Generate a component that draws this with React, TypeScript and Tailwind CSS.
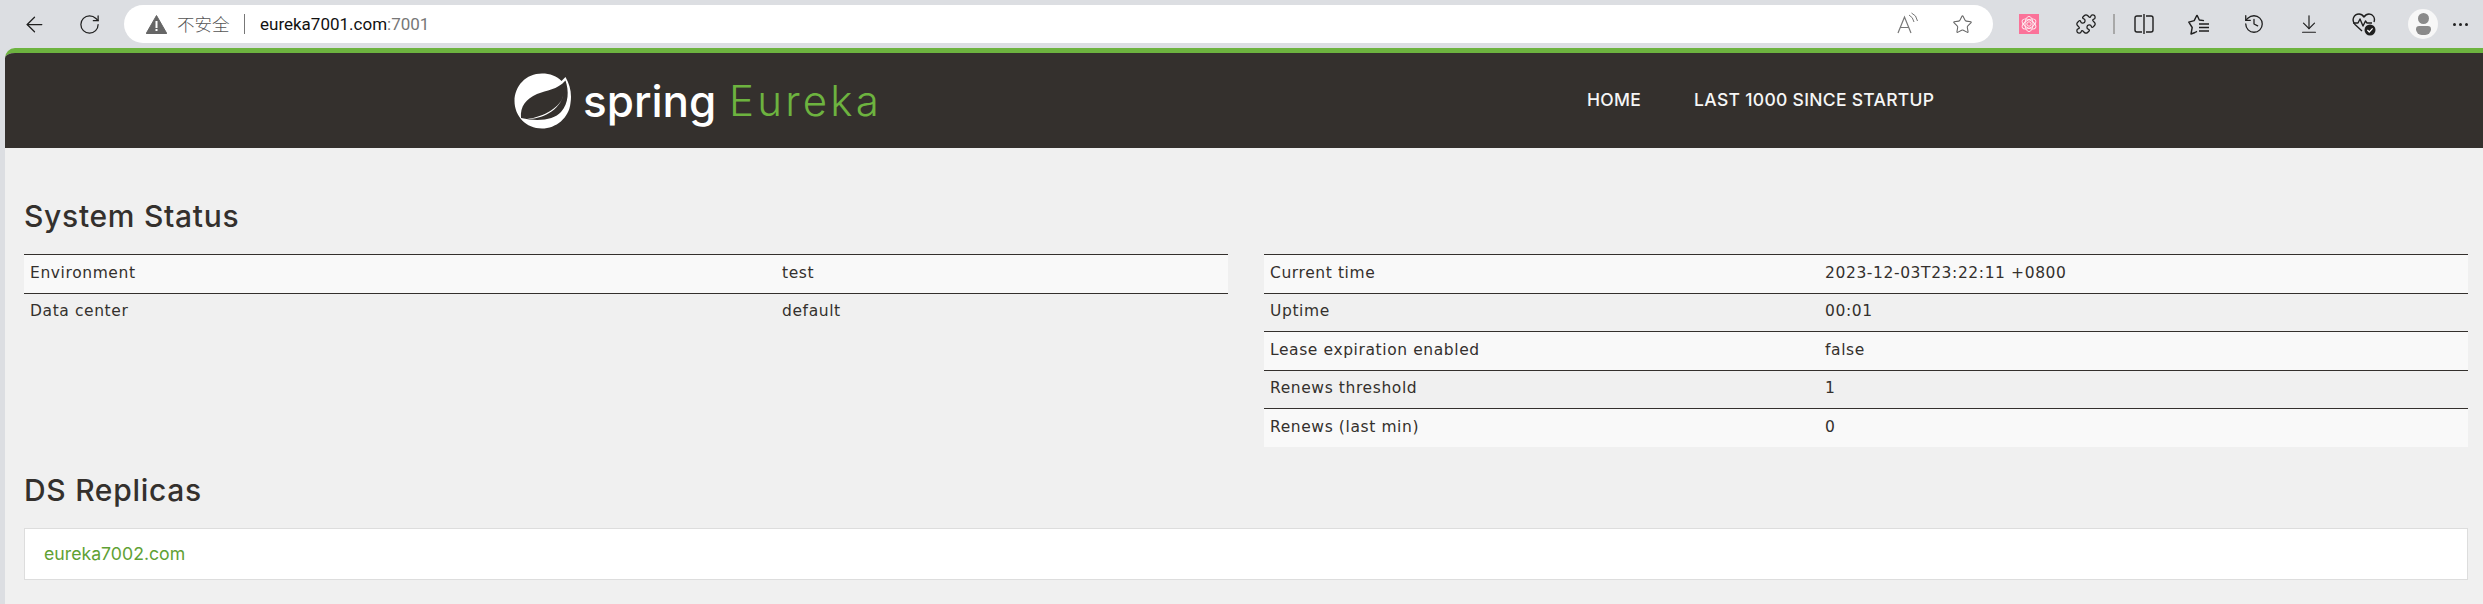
import { ArrowLeft, RotateCw, Star, Puzzle, History, ArrowDownToLine } from "lucide-react";

const ic = { size: 22, strokeWidth: 1.4, color: "#1f1f1f" };

function Btn({ children, className = "" }: { children: React.ReactNode; className?: string }) {
  return <div className={`flex h-[48px] w-[55px] shrink-0 items-center justify-center ${className}`}>{children}</div>;
}

function Warning() {
  return (
    <svg width="21" height="19" viewBox="0 0 21 19">
      <path d="M10.5 0.5 L20.8 18.5 L0.2 18.5 Z" fill="#666" stroke="#666" strokeLinejoin="round" />
      <rect x="9.5" y="6" width="2" height="7" fill="#fff" />
      <rect x="9.5" y="14" width="2" height="2" fill="#fff" />
    </svg>
  );
}

function ReadAloud() {
  return (
    <svg width="22" height="24" viewBox="0 0 22 24" fill="none" stroke="#777" strokeWidth="1.2">
      <path d="M1 21 L7.5 5 L14 21 M3.4 15.5 H11.6" />
      <path d="M12 3 Q16 5 17 10 M14.5 1 Q19.5 3 20.5 9" strokeWidth="1" />
    </svg>
  );
}

function GptIcon() {
  return (
    <svg width="20" height="20" viewBox="0 0 20 20">
      <rect width="20" height="20" fill="#fb7299" />
      <g fill="none" stroke="#fff" strokeWidth="0.9" opacity="0.9">
        <circle cx="10" cy="10" r="2.2" />
        <ellipse cx="10" cy="10" rx="7.6" ry="4" transform="rotate(30 10 10)" />
        <ellipse cx="10" cy="10" rx="7.6" ry="4" transform="rotate(90 10 10)" />
        <ellipse cx="10" cy="10" rx="7.6" ry="4" transform="rotate(150 10 10)" />
      </g>
    </svg>
  );
}

function SplitIcon() {
  return (
    <svg width="20" height="22" viewBox="0 0 20 22" fill="none" stroke="#1f1f1f" strokeWidth="1.4">
      <path d="M8 3 H3 Q1 3 1 5 V17 Q1 19 3 19 H8 M12 3 H17 Q19 3 19 5 V17 Q19 19 17 19 H12" />
      <path d="M10 1 V21" />
    </svg>
  );
}

function FavList() {
  return (
    <svg width="22" height="22" viewBox="0 0 22 22" fill="none" stroke="#1f1f1f" strokeWidth="1.4" strokeLinejoin="round">
      <path d="M9 2 L11.3 7 L16 7.6 M7 19.5 L3 21 L4.2 14.5 L0.8 9.2 L6.2 7.6 L9 2 M7 19.5 L9 18.4" />
      <path d="M11 11 H21 M11 14.5 H21 M11 18 H21" />
    </svg>
  );
}

function Health() {
  return (
    <svg width="24" height="24" viewBox="0 0 24 24" fill="none" stroke="#1f1f1f" strokeWidth="1.4" strokeLinejoin="round">
      <path d="M10 19 L3 12.5 C-1 8 2 2 7 2 C9.5 2 11 3.5 12 5 C13 3.5 14.5 2 17 2 C21 2 23.5 6 22 10" />
      <path d="M1 11 H6 L8 7 L11 14 L13.5 9 L15 11 H20" />
      <circle cx="18" cy="18" r="5.5" fill="#1f1f1f" stroke="none" />
      <path d="M15.4 18 L17.3 20 L20.6 16.3" stroke="#fff" strokeWidth="1.2" />
    </svg>
  );
}

function Avatar() {
  return (
    <div className="flex h-[30px] w-[30px] flex-col items-center justify-center gap-[2px] rounded-full bg-[#f7f7f7]">
      <div className="h-[11px] w-[11px] rounded-full bg-[#8a8a8a]" />
      <div className="h-[9px] w-[15px] rounded-b-[7px] rounded-t-[4px] bg-[#8a8a8a]" />
    </div>
  );
}

function Toolbar() {
  return (
    <div className="flex h-[48px] shrink-0 items-center bg-[#dcdee2]">
      <div className="w-[7px] shrink-0" />
      <Btn><ArrowLeft {...ic} size={25} strokeWidth={1.2} /></Btn>
      <Btn><RotateCw {...ic} size={23} strokeWidth={1.3} /></Btn>
      <div className="ml-[7px] flex h-[38px] w-[1869px] shrink-0 items-center rounded-[19px] bg-white pl-[22px]">
        <Warning />
        <span className="ml-[10px] font-['Noto_Sans_CJK_SC',sans-serif] text-[17.5px] font-light leading-none text-[#555]">不安全</span>
        <span className="ml-[14px] h-[20px] w-[1.5px] bg-[#777]" />
        <span className="ml-[15px] font-['Roboto',sans-serif] text-[17px] leading-none text-[#111]">
          eureka7001.com<span className="text-[#777]">:7001</span>
        </span>
        <div className="ml-auto flex items-center">
          <Btn className="w-[50px]"><ReadAloud /></Btn>
          <Btn className="w-[50px]"><Star size={21} strokeWidth={1.2} color="#666" /></Btn>
          <div className="w-[3px]" />
        </div>
      </div>
      <div className="w-[8px] shrink-0" />
      <Btn className="w-[55px]"><GptIcon /></Btn>
      <div className="w-[2px] shrink-0" />
      <Btn><Puzzle {...ic} /></Btn>
      <span className="h-[20px] w-[2px] shrink-0 bg-[#a8a8a8]" />
      <Btn className="ml-[1px] w-[55px]"><SplitIcon /></Btn>
      <Btn><FavList /></Btn>
      <Btn><History {...ic} /></Btn>
      <Btn><ArrowDownToLine {...ic} strokeWidth={1.3} /></Btn>
      <Btn><Health /></Btn>
      <Btn className="ml-[2px] w-[60px]"><Avatar /></Btn>
      <div className="flex shrink-0 gap-[3px]">
        <span className="h-[3px] w-[3px] rounded-full bg-[#222]" />
        <span className="h-[3px] w-[3px] rounded-full bg-[#222]" />
        <span className="h-[3px] w-[3px] rounded-full bg-[#222]" />
      </div>
    </div>
  );
}

function SpringLeaf() {
  return (
    <svg width="57" height="56" viewBox="0 0 57 56" className="shrink-0">
      <path d="M28 0.5 C36 0.5 43 3 47.5 8 L51.5 4 C56 12 58 20 56.5 30 C55 45 42 55.5 28 55.5 C12 55.5 0.5 43 0.5 28 C0.5 13 12 0.5 28 0.5 Z" fill="#fff" />
      <path d="M7 45 C6 33 12 26 23 21 C33 17 43 17 51.5 7.5 C55 18 55 30 47 39 C40 47 24 49 7 45 Z" fill="#34302d" />
      <path d="M13 46 C28 46 45 38 49.5 22 C47 34 30 44 13 46 Z" fill="#fff" />
    </svg>
  );
}

function Header() {
  return (
    <div className="flex h-[95px] shrink-0 items-center bg-[#34302d] pl-[509px]">
      <SpringLeaf />
      <span className="ml-[12px] w-[146px] font-['Inter',sans-serif] text-[44px] font-medium leading-none tracking-[0px] text-white">spring</span>
      <span className="font-['Inter',sans-serif] text-[42px] font-light leading-none tracking-[3.2px] text-[#6db33f]">Eureka</span>
      <div className="ml-[705px] flex items-center gap-[53px] pb-[2px] font-['Inter',sans-serif] text-[17.5px] font-medium uppercase leading-none tracking-[0.3px] text-[#f6f6f6]">
        <span>Home</span>
        <span>Last 1000 since startup</span>
      </div>
    </div>
  );
}

function InfoTable({ rows, first }: { rows: [string, string][]; first: string }) {
  return (
    <table className="w-[1204px] shrink-0 border-collapse font-['DejaVu_Sans',sans-serif] text-[15.5px] tracking-[0.6px] text-[#34302d]">
      <tbody>
        {rows.map(([k, v], i) => (
          <tr key={k} className={i % 2 === 0 ? "bg-[#f9f9f9]" : ""}>
            <td className={`h-[38.5px] border-t border-[#34302d] p-0 pb-[1px] pl-[6px] ${first}`}>{k}</td>
            <td className="h-[38.5px] border-t border-[#34302d] p-0 pb-[1px]">{v}</td>
          </tr>
        ))}
      </tbody>
    </table>
  );
}

export default function App() {
  return (
    <div className="flex h-[604px] w-[2483px] flex-col overflow-hidden bg-[#dcdee2]">
      <Toolbar />
      <div className="flex-1 pl-[5px]">
        <main className="h-full overflow-hidden rounded-tl-[10px] border-t-[5px] border-[#6db33f] bg-[#f0f0f0]">
          <Header />
          <div className="pl-[19px] pr-[15px]">
            <h2 className="mt-[48px] h-[40px] font-['Inter',sans-serif] text-[30px] font-medium leading-[40px] tracking-[0.7px] text-[#34302d]">System Status</h2>
            <div className="mt-[18px] flex h-[193px] items-start justify-between">
              <InfoTable first="w-[758px]" rows={[["Environment", "test"], ["Data center", "default"]]} />
              <InfoTable
                first="w-[561px]"
                rows={[
                  ["Current time", "2023-12-03T23:22:11 +0800"],
                  ["Uptime", "00:01"],
                  ["Lease expiration enabled", "false"],
                  ["Renews threshold", "1"],
                  ["Renews (last min)", "0"],
                ]}
              />
            </div>
            <h2 className="mt-[23px] h-[40px] font-['Inter',sans-serif] text-[30px] font-medium leading-[40px] tracking-[0.7px] text-[#34302d]">DS Replicas</h2>
            <div className="mt-[18px] flex h-[52px] items-center border border-[#ddd] bg-white pl-[19px] font-['Inter',sans-serif] text-[17.7px] text-[#5fa134]">
              eureka7002.com
            </div>
          </div>
        </main>
      </div>
    </div>
  );
}
